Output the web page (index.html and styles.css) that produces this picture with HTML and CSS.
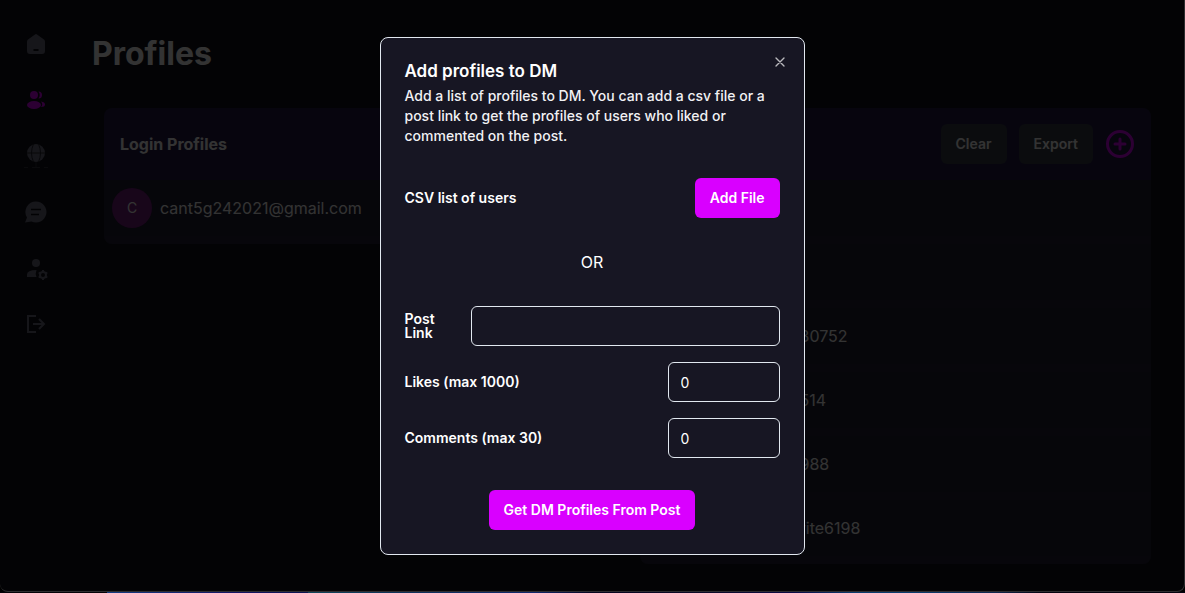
FILE: index.html
```
<!DOCTYPE html>
<html lang="en">

<head>
    <meta charset="UTF-8">
    <meta name="viewport" content="width=device-width, initial-scale=1.0">
    <title>Profiles</title>
    <link rel="stylesheet" href="styles.css">
</head>

<body>
    <div class="window">
        <nav class="sidebar">
            <a href="#" class="nav-link" aria-label="Home">
                <svg width="24" height="24" viewBox="0 0 24 24">
                    <path fill="currentColor" fill-rule="evenodd" d="M11 2.400q1-.8 2 0l7 5.200q1 .8 1 2v9.400q0 3-3 3H6q-3 0-3-3V9.600q0-1.200 1-2zM9.500 17v2h5v-2z"/>
                </svg>
            </a>
            <a href="#" class="nav-link active" aria-label="Profiles">
                <svg width="24" height="24" viewBox="0 0 24 24" fill="currentColor">
                    <circle cx="10" cy="7" r="4"/>
                    <ellipse cx="10" cy="17" rx="7" ry="4"/>
                    <path d="M14.500 3.500a3.500 3.500 0 1 1 0 7q2.500-3.500 0-7zM17 13.500q4 .5 4 3t-4 2.500q2.500-2.500 0-5.500z"/>
                </svg>
            </a>
            <a href="#" class="nav-link" aria-label="Network">
                <svg width="24" height="24" viewBox="0 0 24 24">
                    <circle cx="12" cy="9" r="9" fill="currentColor"/>
                    <path fill="none" stroke="#26262f" d="M3 9h18M9.500 0q-4 9 0 18M14.500 0q4 9 0 18"/>
                    <path stroke="#33333f" d="M12 18v5M0 23.500h4M8 23.500h8M20 23.500h4"/>
                </svg>
            </a>
            <a href="#" class="nav-link" aria-label="Messages">
                <svg width="24" height="24" viewBox="0 0 24 24">
                    <path fill="currentColor" d="M12 1.500a10.500 10.500 0 1 1-4.500 20L1 22.500l2-5A10.500 10.500 0 0 1 12 1.500z"/>
                    <path stroke="#0d0d14" stroke-width="1.500" d="M7 9.500h10M7 14.500h8"/>
                </svg>
            </a>
            <a href="#" class="nav-link" aria-label="Account settings">
                <svg width="24" height="24" viewBox="0 0 24 24" overflow="visible">
                    <circle cx="12" cy="7" r="4" fill="currentColor"/>
                    <path fill="currentColor" d="M3 21v-2.500q0-4.500 9.500-4.500-1.500 3.500 0 7z"/>
                    <circle cx="19" cy="19" r="3" fill="none" stroke="currentColor" stroke-width="2"/>
                    <path fill="none" stroke="currentColor" stroke-width="2" d="M19 14v2M19 22v2M14.700 16.500l1.700 1M21.600 20.500l1.700 1M14.700 21.500l1.700-1M21.600 17.500l1.700-1"/>
                </svg>
            </a>
            <a href="#" class="nav-link" aria-label="Log out">
                <svg width="24" height="24" viewBox="0 0 24 24" fill="none" stroke="currentColor" stroke-width="2">
                    <path d="M12 4H4v16h8M9 12h11M15 7l5 5-5 5"/>
                </svg>
            </a>
        </nav>

        <main class="content">
            <h1 class="page-title">Profiles</h1>
            <div class="cards">
                <section class="card">
                    <div class="card-header">
                        <h2 class="card-title">Login Profiles</h2>
                    </div>
                    <ul class="list">
                        <li class="row"><span class="avatar">C</span>cant5g242021@gmail.com</li>
                    </ul>
                </section>
                <section class="card">
                    <div class="card-header">
                        <div class="actions">
                            <button class="btn btn-dark">Clear</button>
                            <button class="btn btn-dark">Export</button>
                            <button class="btn-add" aria-label="Add profiles">
                                <svg width="30" height="30" viewBox="0 0 30 30" fill="none" stroke="currentColor" stroke-width="3">
                                    <circle cx="15" cy="15" r="12.500"/>
                                    <path stroke-linecap="round" d="M15 10v10M10 15h10"/>
                                </svg>
                            </button>
                        </div>
                    </div>
                    <ul class="list list-dm">
                        <li class="row"></li>
                        <li class="row"></li>
                        <li class="row">30752</li>
                        <li class="row">514</li>
                        <li class="row">988</li>
                        <li class="row">rite6198</li>
                    </ul>
                </section>
            </div>
        </main>
    </div>
    <div class="strip"></div>

    <div class="overlay">
        <form class="modal" role="dialog" aria-labelledby="modal-title">
            <button type="button" class="close" aria-label="Close">
                <svg width="16" height="16" viewBox="0 0 24 24" fill="none" stroke="currentColor" stroke-width="2" stroke-linecap="round">
                    <path d="M18 6L6 18M6 6l12 12"/>
                </svg>
            </button>
            <div class="modal-header">
                <h2 class="modal-title" id="modal-title">Add profiles to DM</h2>
                <p class="modal-text">Add a list of profiles to DM. You can add a csv file or a post link to get the profiles of users who liked or commented on the post.</p>
            </div>
            <div class="field">
                <span class="label">CSV list of users</span>
                <button type="button" class="btn btn-pink">Add File</button>
            </div>
            <p class="or">OR</p>
            <div class="fields">
                <div class="field">
                    <label class="label label-link" for="link">Post Link</label>
                    <input class="input input-link" id="link" type="text">
                </div>
                <div class="field">
                    <label class="label" for="likes">Likes (max 1000)</label>
                    <input class="input input-number" id="likes" type="number" value="0" max="1000">
                </div>
                <div class="field">
                    <label class="label" for="comments">Comments (max 30)</label>
                    <input class="input input-number" id="comments" type="number" value="0" max="30">
                </div>
            </div>
            <button type="button" class="btn btn-pink btn-submit">Get DM Profiles From Post</button>
        </form>
    </div>
</body>

</html>
```
FILE: styles.css
```
*{
    margin: 0;
    padding: 0;
    box-sizing: border-box;
}
body{
    min-height: 100vh;
    display: flex;
    flex-direction: column;
    background-color: #000;
    color: #fff;
    font-family: Inter, "Liberation Sans", sans-serif;
    font-size: 16px;
    line-height: 24px;
}
button, input{
    font: inherit;
    color: inherit;
}
.window{
    flex: 1;
    display: flex;
    border: solid #e6e6f0;
    border-width: 0 1px 1px 0;
    border-radius: 0 0 8px 8px;
    background-color: #11111a;
}
.sidebar{
    display: flex;
    flex-direction: column;
    gap: 32px;
    padding: 32px 24px;
}
.nav-link{
    height: 24px;
    color: #6e6e82;
}
.nav-link svg{
    display: block;
}
.nav-link.active{
    color: #d900ff;
}
.content{
    flex: 1;
    padding: 36px 33px 27px 20px;
}
.page-title{
    font-size: 32px;
    line-height: 36px;
    font-weight: 700;
}
.cards{
    display: flex;
    align-items: flex-start;
    gap: 24px;
    padding: 36px 0 0 12px;
}
.card{
    flex: 1;
    border-radius: 8px;
    overflow: hidden;
}
.card-header{
    height: 72px;
    display: flex;
    align-items: center;
    padding: 16px;
    background-color: #231c46;
}
.card-title{
    font-size: 16px;
    font-weight: 700;
}
.actions{
    display: flex;
    align-items: center;
    gap: 12px;
    margin-left: auto;
}
.list{
    list-style: none;
}
.row{
    height: 64px;
    display: flex;
    align-items: center;
    gap: 8px;
    padding: 0 8px;
    border-bottom: 8px solid #231f37;
    background-color: #201e32;
}
.list-dm .row{
    padding-left: 160px;
}
.avatar{
    width: 40px;
    height: 40px;
    border-radius: 50%;
    display: grid;
    place-items: center;
    font-size: 14px;
    background-color: #781e82;
}
.btn{
    height: 40px;
    padding: 0 15px;
    border: 0;
    border-radius: 6px;
    font-size: 14px;
    line-height: 20px;
    font-weight: 600;
    cursor: pointer;
}
.btn-dark{
    background-color: #373c46;
}
.btn-pink{
    background-color: #d900ff;
}
.btn-add{
    border: 0;
    background: none;
    color: #d900ff;
}
.btn-add svg{
    display: block;
}
/* sits above the overlay, so its colours are not dimmed */
.strip{
    position: relative;
    z-index: 1;
    height: 2px;
    background: linear-gradient(90deg, #030308 9%, #143c82 9%, #141464 20%, #0a1450 26%, #0f465a 26%, #0f325a 34%, #0f286e 45%, #05051e 50%, #0a0a28 60%, #0a0a46 67%, #0a3c6e 72%, #0a3c6e 77%, #0f2850 84%, #03030f 88%);
}
.overlay{
    position: fixed;
    inset: 0;
    display: flex;
    align-items: center;
    justify-content: center;
    padding: 0 1px 1px 0;
    background-color: rgba(0, 0, 0, 0.8);
}
.modal{
    position: relative;
    width: 100%;
    max-width: 425px;
    display: flex;
    flex-direction: column;
    gap: 32px;
    padding: 24px;
    border: 1px solid #e2e8f0;
    border-radius: 8px;
    background-color: #171623;
}
.close{
    position: absolute;
    top: 16px;
    right: 16px;
    border: 0;
    background: none;
    opacity: 0.7;
}
.close svg{
    display: block;
}
.modal-header{
    display: flex;
    flex-direction: column;
    gap: 6px;
}
.modal-title{
    font-size: 17px;
    line-height: 18px;
    font-weight: 600;
}
.modal-text{
    font-size: 14px;
    line-height: 20px;
    font-weight: 500;
    color: #f1f1f4;
}
.field{
    display: flex;
    align-items: center;
    justify-content: space-between;
    gap: 16px;
}
.fields{
    display: flex;
    flex-direction: column;
    gap: 16px;
}
.label{
    font-size: 14px;
    line-height: 14px;
    font-weight: 600;
}
.label-link{
    width: 50px;
}
.or{
    text-align: center;
}
.input{
    height: 40px;
    padding: 0 12px;
    border: 1px solid #e2e8f0;
    border-radius: 6px;
    background-color: transparent;
    font-size: 14px;
}
.input-link{
    flex: 1;
    min-width: 0;
}
.input-number{
    width: 112px;
}
.btn-submit{
    align-self: center;
}
```
